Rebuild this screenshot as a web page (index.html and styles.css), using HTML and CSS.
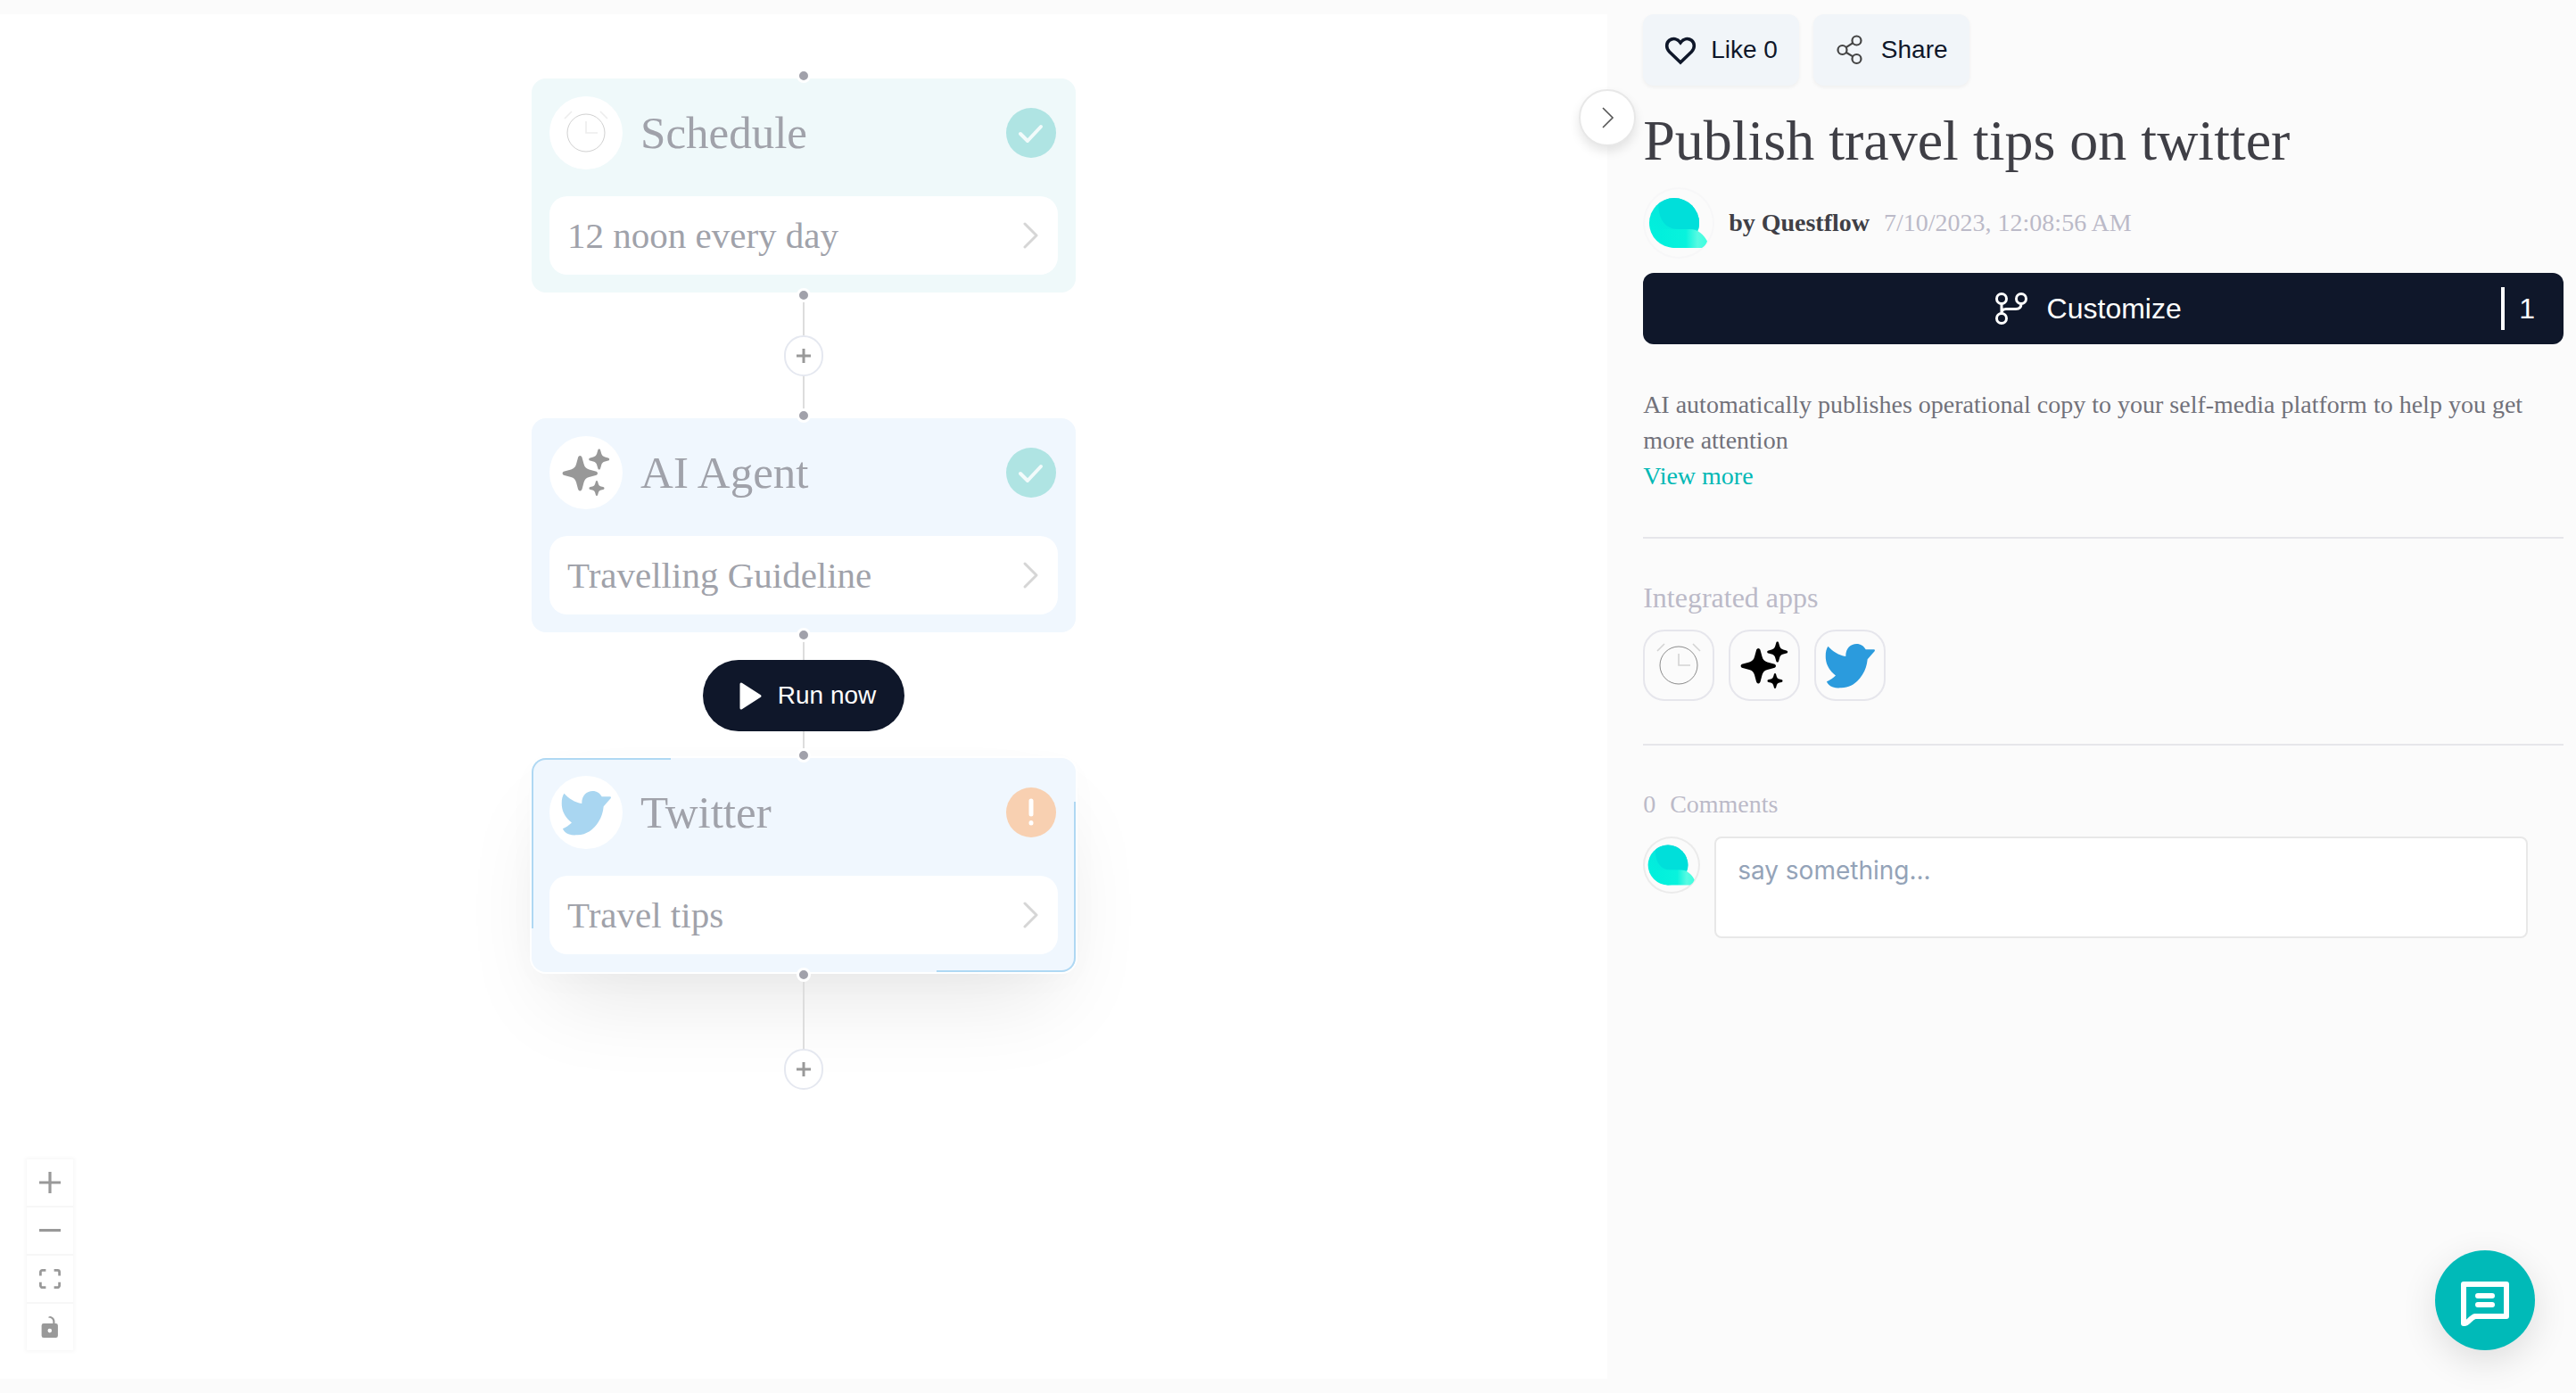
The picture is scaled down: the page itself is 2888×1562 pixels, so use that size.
FILE: index.html
```html
<!DOCTYPE html>
<html lang="en">
<head>
    <meta charset="UTF-8">
    <meta name="viewport" content="width=device-width, initial-scale=1.0">
    <title>Publish travel tips on twitter</title>
    <link rel="stylesheet" href="styles.css">
</head>
<body>
<!-- shared icons -->
<svg class="defs" width="0" height="0" aria-hidden="true">
    <defs>
        <linearGradient id="blob" x1="1" y1="0" x2="0.3" y2="1">
            <stop offset="0" stop-color="#0adfdb"/>
            <stop offset="1" stop-color="#00f2dd"/>
        </linearGradient>
        <linearGradient id="tail" x1="0" y1="0.5" x2="1" y2="0.5">
            <stop offset="0" stop-color="#00efdc"/>
            <stop offset="0.6" stop-color="#08f3dd"/>
            <stop offset="0.82" stop-color="#58fae2"/>
            <stop offset="1" stop-color="#3dffdf"/>
        </linearGradient>
        <clipPath id="blobClip"><circle cx="35" cy="40" r="28"/></clipPath>
    </defs>
    <symbol id="clock" viewBox="0 0 56 56">
        <circle cx="28" cy="28" r="21" fill="none" stroke="#8c8c8c" stroke-width="1"/>
        <path d="M28 15v13h13M4 12l8-8M44 4l8 8" fill="none" stroke="#d4d4d4" stroke-width="1.6"/>
    </symbol>
    <symbol id="sparkles" viewBox="0 0 56 56">
        <g fill="currentColor">
            <path d="M21.3 9c1.2 0 2 1 2.3 2.200l2 7.400c.9 3.200 2.600 4.900 5.800 5.800l7.400 2c1.200.3 2.200 1.100 2.200 2.300s-1 2-2.200 2.300l-7.400 2c-3.200.9-4.900 2.600-5.800 5.800l-2 7.400c-.3 1.200-1.100 2.200-2.300 2.200s-2-1-2.300-2.200l-2-7.400c-.9-3.200-2.600-4.900-5.800-5.800l-7.400-2C2.600 30.700 1.600 29.900 1.600 28.700s1-2 2.200-2.300l7.400-2c3.200-.9 4.900-2.600 5.800-5.800l2-7.400C19.300 10 20.100 9 21.300 9z"/>
            <path d="M42.700 1.400c.8 0 1.200.5 1.400 1.300l1 3.500c.7 2.500 1.700 3.500 4.200 4.200l3.500 1c.8.2 1.400.8 1.400 1.600s-.6 1.400-1.400 1.600l-3.500 1c-2.500.7-3.500 1.700-4.200 4.200l-1 3.500c-.2.8-.6 1.300-1.400 1.300s-1.200-.5-1.400-1.300l-1-3.500c-.7-2.500-1.700-3.500-4.200-4.200l-3.500-1c-.8-.2-1.400-.8-1.400-1.600s.6-1.400 1.400-1.600l3.500-1c2.500-.7 3.500-1.700 4.200-4.200l1-3.500c.2-.8.600-1.300 1.400-1.300z"/>
            <path d="M40 37c.6 0 .9.400 1.100 1l.7 2.400c.5 1.700 1.300 2.500 3 3l2.400.7c.8.2 1.300.7 1.300 1.400s-.5 1.200-1.300 1.400l-2.400.7c-1.700.5-2.500 1.300-3 3l-.7 2.400c-.2.6-.5 1-1.100 1s-.9-.4-1.100-1l-.7-2.400c-.5-1.700-1.300-2.500-3-3l-2.400-.7c-.8-.2-1.300-.7-1.300-1.400s.5-1.200 1.300-1.400l2.400-.7c1.700-.5 2.500-1.300 3-3l.7-2.400c.2-.6.5-1 1.100-1z"/>
        </g>
    </symbol>
    <symbol id="bird" viewBox="0 0 56 56">
        <path fill="currentColor" d="M3.500 6.700C8.500 12.500 15.500 16.800 23.300 18C23 9.500 28.500 4 35.500 4C40 4 43.600 6.300 45.700 10.300H55C56 10.300 56.200 11.300 55.600 12.200L47.700 21.300C47 28 45.500 33 42 38.500C36.500 47.500 28.500 53 18.500 53.300C15 53.500 12 53.600 9 52.500C5.500 51.500 3 49.300 1.900 46.300C5.300 44.800 9 42.600 12 39.600C5.500 34.500 1.600 28 .9 21C.5 15.500 .8 10.500 3.500 6.700z"/>
    </symbol>
    <symbol id="avatar" viewBox="0 0 80 80">
        <circle cx="35" cy="40" r="28" fill="url(#blob)"/>
        <path clip-path="url(#blobClip)" fill="#00dfda" d="M18 10C15 32 22 47 40 47H70V5z"/>
        <path fill="url(#tail)" d="M27 47H52C62 47 68 53 72 60.500C71 63.500 69 66.300 66 68H35C22 66 14 57 12 48C16 50 20 47 27 47z"/>
    </symbol>
    <symbol id="check" viewBox="0 0 56 56">
        <path d="M16 29l8 8 15-16" fill="none" stroke="#f2fbfb" stroke-width="4" stroke-linecap="round" stroke-linejoin="round"/>
    </symbol>
    <symbol id="chevron" viewBox="0 0 20 32">
        <path d="M3 3l13 13L3 29" fill="none" stroke="currentColor" stroke-width="3" stroke-linecap="round" stroke-linejoin="round"/>
    </symbol>
    <symbol id="plus" viewBox="0 0 16 16">
        <path d="M0 8h16M8 0v16" fill="none" stroke="#999" stroke-width="3"/>
    </symbol>
</svg>

<main class="page">
    <section class="canvas">
        <div class="flow">
            <article class="node node-schedule">
                <header class="node-head">
                    <span class="node-icon"><svg class="app-icon faded"><use href="#clock"/></svg></span>
                    <h2 class="node-title">Schedule</h2>
                    <span class="status done"><svg width="56" height="56"><use href="#check"/></svg></span>
                </header>
                <button class="node-row" type="button">12 noon every day<svg class="chevron"><use href="#chevron"/></svg></button>
            </article>
            <div class="connector">
                <button class="add" type="button" aria-label="Add step"><svg width="16" height="16"><use href="#plus"/></svg></button>
            </div>
            <article class="node">
                <header class="node-head">
                    <span class="node-icon"><svg class="app-icon faded"><use href="#sparkles"/></svg></span>
                    <h2 class="node-title">AI Agent</h2>
                    <span class="status done"><svg width="56" height="56"><use href="#check"/></svg></span>
                </header>
                <button class="node-row" type="button">Travelling Guideline<svg class="chevron"><use href="#chevron"/></svg></button>
            </article>
            <div class="connector">
                <button class="run" type="button">
                    <svg width="36" height="36" viewBox="0 0 36 36"><path d="M11 5v27l21-13.500z" fill="#fff" stroke="#fff" stroke-width="3" stroke-linejoin="round"/></svg>
                    Run now
                </button>
            </div>
            <article class="node node-active">
                <header class="node-head">
                    <span class="node-icon"><svg class="app-icon bird faded"><use href="#bird"/></svg></span>
                    <h2 class="node-title">Twitter</h2>
                    <span class="status warn">
                        <svg width="56" height="56" viewBox="0 0 56 56"><path d="M28 15v15M28 39.500v.5" fill="none" stroke="#fff" stroke-width="5" stroke-linecap="round"/></svg>
                    </span>
                </header>
                <button class="node-row" type="button">Travel tips<svg class="chevron"><use href="#chevron"/></svg></button>
            </article>
            <div class="connector last">
                <button class="add" type="button" aria-label="Add step"><svg width="16" height="16"><use href="#plus"/></svg></button>
            </div>
        </div>

        <div class="controls">
            <button type="button" aria-label="Zoom in"><svg viewBox="0 0 32 32"><path d="M32 18.133H18.133V32h-4.266V18.133H0v-4.266h13.867V0h4.266v13.867H32z"/></svg></button>
            <button type="button" aria-label="Zoom out"><svg viewBox="0 0 32 5"><path d="M0 0h32v4.200H0z"/></svg></button>
            <button type="button" aria-label="Fit view"><svg viewBox="0 0 32 30"><path d="M3.692 4.630c0-.53.4-.938.939-.938h5.215V0H4.708C2.130 0 0 2.054 0 4.630v5.216h3.692V4.631zM27.354 0h-5.200v3.692h5.170c.53 0 .984.4.984.939v5.215H32V4.631A4.624 4.624 0 0027.354 0zm.954 24.830c0 .532-.4.940-.939.940h-5.215v3.768h5.215c2.577 0 4.631-2.130 4.631-4.707v-5.139h-3.692v5.139zm-23.677.940c-.531 0-.939-.4-.939-.940v-5.138H0v5.139c0 2.577 2.130 4.707 4.708 4.707h5.138V25.770H4.631z"/></svg></button>
            <button type="button" aria-label="Lock"><svg viewBox="0 0 25 32"><path d="M21.333 10.667H19.810V7.619C19.810 3.429 16.380 0 12.190 0c-4.114 1.828-1.370 2.133.305 2.438 1.676.305 4.420 2.590 4.420 5.181v3.048H3.047A3.056 3.056 0 000 13.714v15.238A3.056 3.056 0 003.048 32h18.285a3.056 3.056 0 003.048-3.048V13.714a3.056 3.056 0 00-3.048-3.047zM12.190 24.533a3.056 3.056 0 01-3.047-3.047 3.056 3.056 0 013.047-3.048 3.056 3.056 0 013.048 3.048 3.056 3.056 0 01-3.048 3.047z"/></svg></button>
        </div>

        <button class="collapse" type="button" aria-label="Hide panel">
            <svg width="16" height="24" viewBox="0 0 16 24"><path d="M3 1l11 11L3 23" fill="none" stroke="#555" stroke-width="1.600"/></svg>
        </button>
    </section>

    <aside class="panel">
        <div class="actions">
            <button class="action" type="button">
                <svg width="36" height="36" viewBox="0 0 36 36"><path d="M18 32L5.500 20C1.500 16 2 10 5.500 7.300C9.500 4.300 14.500 5.300 18 9.800C21.500 5.300 26.500 4.300 30.500 7.300C34 10 34.500 16 30.500 20z" fill="none" stroke="#0f172a" stroke-width="3.600"/></svg>
                Like 0
            </button>
            <button class="action" type="button">
                <svg width="36" height="36" viewBox="0 0 36 36"><g fill="none" stroke="#444" stroke-width="2.200"><circle cx="24.500" cy="7.500" r="5"/><circle cx="8.500" cy="18" r="5"/><circle cx="24.500" cy="28" r="5"/><path d="M12.700 15.200l7.600-5M12.700 20.800l7.600 4.600"/></g></svg>
                Share
            </button>
        </div>
        <h1 class="title">Publish travel tips on twitter</h1>
        <div class="author">
            <span class="avatar"><svg width="80" height="80"><use href="#avatar"/></svg></span>
            <strong>by Questflow</strong>
            <time>7/10/2023, 12:08:56 AM</time>
        </div>
        <button class="customize" type="button">
            <span class="customize-label">
                <svg width="36" height="36" viewBox="0 0 36 36"><g fill="none" stroke="#fff" stroke-width="3"><circle cx="7" cy="7" r="5.500"/><circle cx="29" cy="7" r="5.500"/><circle cx="7" cy="29" r="5.500"/><path d="M7 12.500v11M29 12.500C29 16 27 18.500 23 18.500H12C9 18.500 7 20 7 23"/></g></svg>
                Customize
            </span>
            <span class="customize-count">1</span>
        </button>

        <section class="section description">
            <p>AI automatically publishes operational copy to your self-media platform to help you get more attention</p>
            <a href="#">View more</a>
        </section>

        <section class="section divided">
            <h3 class="apps-title">Integrated apps</h3>
            <div class="apps">
                <span class="app"><svg class="app-icon"><use href="#clock"/></svg></span>
                <span class="app"><svg class="app-icon"><use href="#sparkles"/></svg></span>
                <span class="app"><svg class="app-icon bird"><use href="#bird"/></svg></span>
            </div>
        </section>

        <section class="section divided">
            <h3 class="comments-title"><span>0</span><span>Comments</span></h3>
            <div class="comment-form">
                <span class="avatar small"><svg width="64" height="64"><use href="#avatar"/></svg></span>
                <textarea placeholder="say something..." aria-label="Comment"></textarea>
            </div>
        </section>
    </aside>
</main>

<button class="chat" type="button" aria-label="Open chat">
    <svg width="54" height="58" viewBox="0 -8 54 58"><path d="M3 3H51V39H16C11 40 8 47 4 47H3z" fill="none" stroke="#fff" stroke-width="6" stroke-linejoin="round"/><path d="M19 16h16M19 26h16" stroke="#fff" stroke-width="6" stroke-linecap="round"/></svg>
</button>
</body>
</html>
```

FILE: styles.css
```css
*,
*::before,
*::after {
    box-sizing: border-box;
}
body {
    margin: 0;
    padding: 16px 0;
    background-color: #fbfbfb;
    color: #3f3f46;
    font-family: 'Liberation Serif', 'Times New Roman', serif;
    font-size: 28px;
    line-height: 40px;
}
h1, h2, h3, p {
    margin: 0;
    font-weight: normal;
}
button {
    border: none;
    padding: 0;
    font-family: 'Liberation Sans', Arial, sans-serif;
    font-size: 28px;
    cursor: pointer;
}
svg {
    display: block;
    flex-shrink: 0;
}
.defs {
    position: absolute;
}
.page {
    display: grid;
    grid-template-columns: minmax(0, 1fr) 37.6%;
    min-height: calc(100vh - 32px);
}

/* flow canvas */
.canvas {
    position: relative;
    padding: 72px 20px;
    background-color: #ffffff;
}
.flow {
    display: flex;
    flex-direction: column;
    align-items: center;
}
.node {
    position: relative;
    width: 610px;
    max-width: 100%;
    padding: 20px;
    border-radius: 16px;
    background-color: #f0f7fe;
}
.node-schedule {
    background-color: #eff9fa;
}
/* handles on the top and bottom edge */
.node-head::before,
.node-head::after {
    content: "";
    position: absolute;
    z-index: 1;
    left: 50%;
    width: 16px;
    height: 16px;
    border: 3px solid #ffffff;
    border-radius: 50%;
    background-color: #a1a1aa;
    transform: translateX(-50%);
}
.node-head::before {
    top: -11px;
}
.node-head::after {
    bottom: -11px;
}
.node-active {
    box-shadow: 0 0 0 2px #ffffff, 0 50px 100px -24px rgba(0, 0, 0, 0.1), 0 8px 40px rgba(0, 0, 0, 0.02);
}
.node-active::before,
.node-active::after {
    content: "";
    position: absolute;
    width: 156px;
    height: 191px;
    border: 0 solid #afd8f3;
}
.node-active::before {
    top: 0;
    left: 0;
    border-width: 2px 0 0 2px;
    border-top-left-radius: 16px;
}
.node-active::after {
    right: 0;
    bottom: 0;
    border-width: 0 2px 2px 0;
    border-bottom-right-radius: 16px;
}
.node-head {
    display: flex;
    align-items: center;
    gap: 20px;
    padding-right: 2px;
    margin-bottom: 30px;
}
.node-icon {
    display: flex;
    align-items: center;
    justify-content: center;
    width: 82px;
    height: 82px;
    border-radius: 50%;
    background-color: #ffffff;
}
.app-icon {
    width: 56px;
    height: 56px;
    color: #000000;
}
.bird {
    color: #2b9bdd;
}
.faded {
    opacity: 0.4;
}
.node-title {
    flex: 1;
    color: #a0a2aa;
    font-size: 51px;
    line-height: 60px;
}
.status {
    border-radius: 50%;
}
.done {
    background-color: #afe4e3;
}
.warn {
    background-color: #f8d0b1;
}
.node-row {
    display: flex;
    align-items: center;
    justify-content: space-between;
    width: 100%;
    height: 88px;
    padding: 0 20px;
    border-radius: 20px;
    background-color: #ffffff;
    color: #a0a2aa;
    font-family: inherit;
    font-size: 41px;
}
.chevron {
    width: 20px;
    height: 32px;
    color: #d6d6d6;
}
.connector {
    display: flex;
    align-items: center;
    justify-content: center;
    height: 141px;
    background: linear-gradient(#dddddd, #dddddd) center / 2px 100% no-repeat;
}
.connector.last {
    position: relative;
    align-items: flex-end;
    height: 132px;
}
.add {
    display: flex;
    align-items: center;
    justify-content: center;
    width: 44px;
    height: 46px;
    border: 2px solid #e5e8f0;
    border-radius: 23px;
    background-color: #ffffff;
}
.run {
    display: flex;
    align-items: center;
    gap: 16px;
    height: 80px;
    padding: 0 32px;
    border-radius: 40px;
    background-color: #0f172a;
    color: #ffffff;
}

/* zoom controls */
.controls {
    position: absolute;
    left: 30px;
    bottom: 32px;
    display: flex;
    flex-direction: column;
    gap: 2px;
    background-color: #f7f7f7;
    box-shadow: 0 0 4px 2px rgba(0, 0, 0, 0.03);
}
.controls button {
    display: flex;
    align-items: center;
    justify-content: center;
    width: 52px;
    height: 52px;
    background-color: #ffffff;
}
.controls svg {
    width: 24px;
    max-height: 24px;
    fill: #999999;
}
.collapse {
    position: absolute;
    top: 84px;
    right: -32px;
    display: flex;
    align-items: center;
    justify-content: center;
    width: 64px;
    height: 64px;
    border: 2px solid #e8e8e8;
    border-radius: 50%;
    background-color: #ffffff;
    box-shadow: 0 6px 12px rgba(0, 0, 0, 0.1);
}

/* right panel */
.panel {
    padding: 0 14px 0 40px;
}
.actions {
    display: flex;
    gap: 16px;
    margin-bottom: 22px;
}
.action {
    display: flex;
    align-items: center;
    gap: 16px;
    height: 80px;
    padding: 0 24px;
    border-radius: 12px;
    background-color: #f1f5f9;
    color: #0f172a;
    box-shadow: 0 2px 4px rgba(0, 0, 0, 0.05);
}
.title {
    margin-bottom: 12px;
    font-size: 64px;
    line-height: 80px;
}
.author {
    display: flex;
    align-items: center;
    gap: 16px;
    margin-bottom: 16px;
}
.avatar {
    width: 80px;
    height: 80px;
    border-radius: 50%;
    box-shadow: inset 0 0 0 2px #f7f7f8;
}
.avatar.small {
    width: 64px;
    height: 64px;
    box-shadow: inset 0 0 0 2px #ebebeb;
}
time {
    color: #bbbac8;
}
.customize {
    display: flex;
    align-items: center;
    width: 100%;
    height: 80px;
    padding: 0 32px 0 36px;
    border-radius: 12px;
    background-color: #0f172a;
    color: #ffffff;
    font-size: 32px;
}
.customize-label {
    flex: 1;
    display: flex;
    align-items: center;
    justify-content: center;
    gap: 22px;
}
.customize-count {
    padding-left: 16px;
    border-left: 4px solid #ffffff;
    line-height: 48px;
}
.section {
    padding: 48px 0;
}
.divided {
    padding-top: 46px;
    border-top: 2px solid #e6e6ea;
}
.description {
    color: #71717a;
}
.description a {
    color: #00b8b5;
    text-decoration: none;
}
.apps-title {
    margin-bottom: 16px;
    color: #bbbac8;
    font-size: 32px;
}
.apps {
    display: flex;
    gap: 16px;
}
.app {
    display: flex;
    align-items: center;
    justify-content: center;
    width: 80px;
    height: 80px;
    border: 2px solid #e6e6ec;
    border-radius: 24px;
}
.comments-title {
    display: flex;
    gap: 16px;
    margin-bottom: 16px;
    color: #bbbac8;
    font-size: 28px;
}
.comment-form {
    display: flex;
    gap: 16px;
    padding-right: 40px;
}
.comment-form textarea {
    flex: 1;
    height: 114px;
    padding: 16px 24px;
    border: 2px solid #e8e8e8;
    border-radius: 8px;
    background-color: #ffffff;
    font-family: Inter, sans-serif;
    font-size: 28px;
    line-height: 40px;
    resize: none;
}
.comment-form textarea::placeholder {
    color: #94a3b8;
}

/* floating chat button */
.chat {
    position: fixed;
    right: 46px;
    bottom: 48px;
    display: flex;
    align-items: center;
    justify-content: center;
    width: 112px;
    height: 112px;
    border-radius: 50%;
    background-color: #00bab8;
    box-shadow: 0 12px 40px rgba(0, 0, 0, 0.12);
}
```
